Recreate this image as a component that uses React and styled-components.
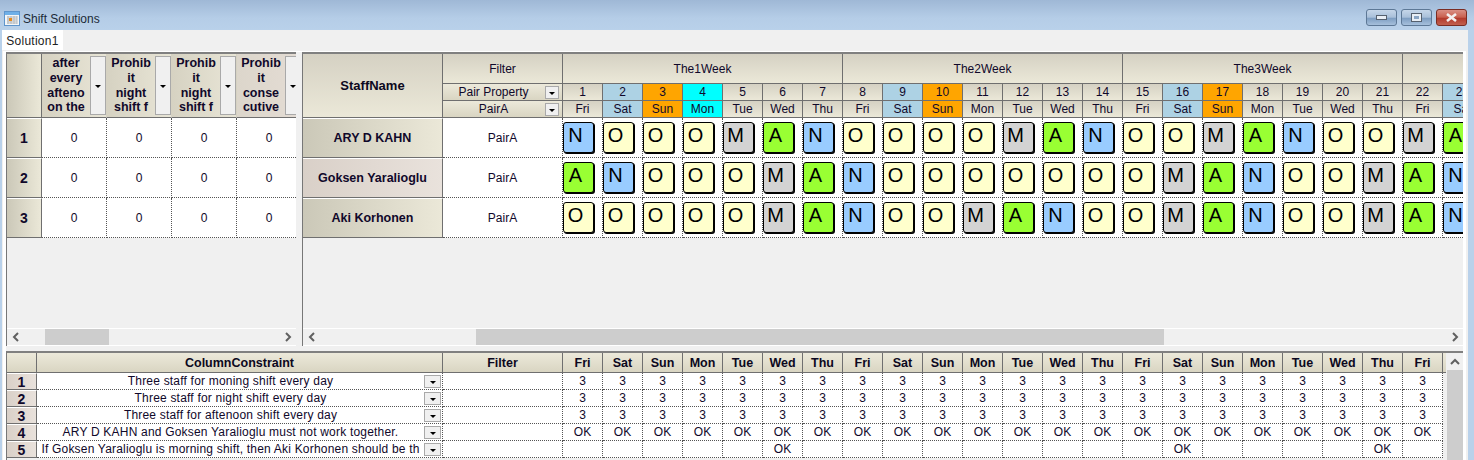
import React from 'react'
import styled, { createGlobalStyle } from 'styled-components'

const GlobalStyle = createGlobalStyle`
html, body {
  margin: 0;
  padding: 0;
  background: #b9d1ea;
  overflow: hidden;
}
* { box-sizing: border-box; }
`

const headGradient = 'linear-gradient(180deg, #d5d1c3 0%, #ebe8d8 100%)'
const topGradient = 'linear-gradient(180deg, #ece9da 0%, #d9d5c2 100%)'
const sideGradient = 'linear-gradient(90deg, #cbc8b8 0%, #ebe8d8 100%)'
const pinkGradient = 'linear-gradient(90deg, #d9d0c8 0%, #e9e2dc 100%)'

const Window = styled.div`
width: 1474px;
height: 460px;
display: flex;
flex-direction: column;
overflow: hidden;
font-family: "Liberation Sans", Arial, sans-serif;
font-size: 12px;
color: #10082a;
background: #b9d1ea;
`
const TitleBar = styled.div`
height: 30px;
flex: none;
display: flex;
align-items: flex-start;
padding: 9px 7px 0 4px;
background: linear-gradient(180deg, #9fb8d6 0%, #b5cde7 60%, #b9d1ea 100%);
`
const IconSlot = styled.div`
height: 16px;
margin-top: 2px;
`
const TitleText = styled.span`
margin: 3px 0 0 3px;
color: #1c2a38;
flex: 1;
`
const WinButton = styled.div`
width: 31px;
height: 17px;
margin-left: 4px;
display: flex;
align-items: center;
justify-content: center;
border: 1px solid #5d7896;
border-radius: 3px;
background: ${p => p.$close
    ? 'linear-gradient(180deg, #d98f84 0%, #c9604f 48%, #b23a2c 55%, #c2604f 100%)'
    : 'linear-gradient(180deg, #c5d6e9 0%, #a9c0da 48%, #7e9ec2 55%, #a6c0dc 100%)'};
border-color: ${p => p.$close ? '#7a2c22' : '#5d7896'};
`
const Client = styled.div`
flex: 1;
margin: 0 6px 0 2px;
background: #f0f0f0;
display: flex;
flex-direction: column;
min-height: 0;
`
const TabStrip = styled.div`
height: 21px;
flex: none;
display: flex;
`
const Tab = styled.div`
width: 61px;
height: 20px;
padding-top: 1px;
background: #fff;
display: flex;
align-items: center;
justify-content: center;
color: #222;
letter-spacing: 0.25px;
`
const Panes = styled.div`
flex: 1;
margin: 0 2px 0 1px;
padding: 1px 3px 0;
background: #fff;
display: flex;
flex-direction: column;
min-height: 0;
`
const TopPanes = styled.div`
height: 294px;
flex: none;
display: flex;
gap: 6px;
background: #f0f0f0;
`
const Splitter = styled.div`
height: 5px;
flex: none;
background: #f0f0f0;
`
const Pane = styled.div`
width: ${p => p.$width}px;
flex: none;
display: flex;
flex-direction: column;
border-left: 1px solid #777;
border-top: 2px solid #808080;
overflow: hidden;
`
const GridArea = styled.div`
flex: 1;
overflow: hidden;
min-height: 0;
`
const Row = styled.div`
display: flex;
height: ${p => p.$h}px;
width: max-content;
`
const Stack = styled.div`
display: flex;
flex-direction: column;
`
const HeadCell = styled.div`
width: ${p => p.$w}px;
height: ${p => p.$h ? `${p.$h}px` : '100%'};
flex: none;
display: flex;
align-items: center;
justify-content: center;
position: relative;
padding-right: ${p => p.$pad || 0}px;
text-align: center;
background: ${p => p.$bg || headGradient};
border-right: 1px solid ${p => p.$plain ? 'transparent' : '#6f6f6f'};
border-bottom: 1px solid #6f6f6f;
font-weight: ${p => p.$bold ? 700 : 400};
font-size: ${p => p.$size || 12}px;
color: ${p => p.$bold ? '#0c0820' : '#10082a'};
`
const SideCell = styled(HeadCell)`
background: ${p => p.$pink ? pinkGradient : sideGradient};
border-top: 1px solid #fff;
font-weight: 700;
`
const MultiHead = styled.div`
flex: 1;
font-weight: 700;
font-size: 12.5px;
line-height: 14.7px;
`
const DropColumn = styled.div`
width: 16px;
height: 59px;
flex: none;
display: flex;
align-items: center;
justify-content: center;
background: #f0f0f0;
border: 1px solid #a9a9a9;
`
const Drop = styled.div`
position: absolute;
right: ${p => p.$right}px;
top: 2px;
width: ${p => p.$w}px;
height: 13px;
display: flex;
align-items: center;
justify-content: center;
background: #f0f0f0;
border: 1px solid #a9a9a9;
`
const Caret = styled.span`
width: 0;
height: 0;
margin-top: 2px;
border-left: 3px solid transparent;
border-right: 3px solid transparent;
border-top: 3px solid #000;
`
const Cell = styled.div`
width: ${p => p.$w}px;
height: 100%;
flex: none;
display: flex;
align-items: center;
justify-content: center;
position: relative;
background: #fff;
border-right: 1px dotted #555;
border-bottom: 1px dotted #555;
white-space: nowrap;
overflow: hidden;
`
const WideText = styled.span`
display: block;
width: 100%;
padding: 0 22px 0 4px;
text-align: center;
overflow: hidden;
white-space: nowrap;
letter-spacing: 0.2px;
`
const ShiftCell = styled.div`
width: 40px;
height: 100%;
flex: none;
padding: 4px 0 0 0;
background: #fff;
border-right: 1px dotted #555;
border-bottom: 1px dotted #555;
`
const ShiftBox = styled.div`
width: 31px;
height: 31px;
display: flex;
justify-content: center;
padding: 0 6px 0 0;
font-size: 20px;
line-height: 24px;
color: #000;
background: ${p => p.$bg};
border: 1px solid #000;
border-radius: 3px;
box-shadow: 1px 1px 0 #000;
`
const ScrollBar = styled.div`
height: 18px;
flex: none;
display: flex;
align-items: center;
background: #f0f0f0;
border-top: 1px solid #fff;
border-bottom: 1px solid #fff;
`
const ScrollTrack = styled.div`
flex: 1;
height: 16px;
padding-left: ${p => p.$left}px;
`
const ScrollThumb = styled.div`
width: ${p => p.$width}px;
height: 100%;
background: #cdcdcd;
`
const ArrowButton = styled.div`
width: ${p => p.$w || 17}px;
height: ${p => p.$h || 16}px;
flex: none;
display: flex;
align-items: center;
justify-content: center;
`
const BottomPane = styled.div`
flex: 1;
display: flex;
background: #f0f0f0;
border-left: 1px solid #777;
border-top: 2px solid #808080;
min-height: 0;
overflow: hidden;
`
const BottomGrid = styled.div`
width: 1436px;
flex: none;
`
const Gutter = styled.div`
width: 3px;
flex: none;
`
const GutterHead = styled.div`
height: 20px;
background: ${topGradient};
border-bottom: 1px solid #6f6f6f;
`
const VScroll = styled.div`
width: 16px;
flex: none;
margin-left: 1px;
display: flex;
flex-direction: column;
`
const VTrack = styled.div`
flex: 1;
background: #cdcdcd;
`

const WEEKDAYS = ['Fri', 'Sat', 'Sun', 'Mon', 'Tue', 'Wed', 'Thu']
const DAY_COUNT = 23
const days = Array.from({ length: DAY_COUNT }, (_, i) => ({ n: i + 1, name: WEEKDAYS[i % 7] }))

const dayColor = (d) => {
    if (d.n === 4) return '#00ffff'
    if (d.name === 'Sat') return '#add2e4'
    if (d.name === 'Sun') return '#ffa500'
    return null
}

const shiftColors = { N: '#99ccff', O: '#ffffcc', M: '#d3d3d3', A: '#99ff33' }

const staff = [
    { name: 'ARY D KAHN', shifts: 'NOOOMANOOOOMANOOMANOOMA' },
    { name: 'Goksen Yaralioglu', pink: true, shifts: 'ANOOOMANOOOOOOOMANOOMAN' },
    { name: 'Aki Korhonen', shifts: 'OOOOOMANOOMANOOMANOOMAN' },
]

const leftHeads = [
    ['after', 'every', 'afteno', 'on the'],
    ['Prohib', 'it', 'night', 'shift f'],
    ['Prohib', 'it', 'night', 'shift f'],
    ['Prohib', 'it', 'conse', 'cutive'],
]

const threes = days.slice(0, 22).map(() => '3')

const constraints = [
    { text: 'Three staff for moning shift every day', vals: threes },
    { text: 'Three staff for night shift every day', vals: threes },
    { text: 'Three staff for aftenoon shift every day', vals: threes },
    { text: 'ARY D KAHN and Goksen Yaralioglu must not work together.', vals: threes.map(() => 'OK') },
    {
        text: 'If Goksen Yaralioglu is morning shift, then Aki Korhonen should be th',
        vals: days.slice(0, 22).map(d => ([6, 16, 21].includes(d.n) ? 'OK' : '')),
    },
]

const Chevron = ({ dir }) => {
    const points = {
        left: '7,1 3,5 7,9',
        right: '3,1 7,5 3,9',
        up: '1,7 5,3 9,7',
    }
    return (
        <svg width="10" height="10" viewBox="0 0 10 10">
            <polyline points={points[dir]} fill="none" stroke="#606060" strokeWidth="2" />
        </svg>
    )
}

// small calendar: blue band on top, grey grid, one orange day
const AppIcon = () => (
    <svg width="16" height="16" viewBox="0 0 16 16">
        <rect x="0.5" y="0.5" width="15" height="14" fill="#f4f6f8" stroke="#5f95cc" />
        <rect x="1" y="1" width="14" height="3" fill="#6fb0e8" />
        <path d="M3 6h10M3 8h10M3 10h10M3 12h10M4 5v8M7 5v8M10 5v8M13 5v8" stroke="#b4b8bc" strokeWidth="1" />
        <rect x="5" y="7" width="3" height="3" fill="#e88a1c" />
    </svg>
)

const Scroll = ({ left, width }) => (
    <ScrollBar>
        <ArrowButton><Chevron dir="left" /></ArrowButton>
        <ScrollTrack $left={left}><ScrollThumb $width={width} /></ScrollTrack>
        <ArrowButton><Chevron dir="right" /></ArrowButton>
    </ScrollBar>
)

const LeftPane = () => (
    <Pane $width={290}>
        <GridArea>
            <Row $h={64}>
                <HeadCell $w={35} $bg={sideGradient} />
                {leftHeads.map((lines, i) => (
                    <HeadCell key={i} $w={65} $plain $bg={i === 3 ? 'linear-gradient(90deg,#dcd6cb,#e4dcd4)' : 'linear-gradient(90deg,#d6d2c2,#e8e5d6)'}>
                        <MultiHead>{lines.map((l, j) => <div key={j}>{l}</div>)}</MultiHead>
                        <DropColumn><Caret /></DropColumn>
                    </HeadCell>
                ))}
            </Row>
            {staff.map((s, i) => (
                <Row key={s.name} $h={40}>
                    <SideCell $w={35} $size={14}>{i + 1}</SideCell>
                    {leftHeads.map((_, j) => <Cell key={j} $w={65}>0</Cell>)}
                </Row>
            ))}
        </GridArea>
        <Scroll left={21} width={64} />
    </Pane>
)

const RightPane = () => (
    <Pane $width={1161}>
        <GridArea>
            <Row $h={64}>
                <HeadCell $w={140} $bold $size={13}>StaffName</HeadCell>
                <Stack>
                    <HeadCell $w={120} $h={30}>Filter</HeadCell>
                    <HeadCell $w={120} $h={17} $pad={18} $bg={topGradient}>
                        <span>Pair Property</span>
                        <Drop $right={3} $w={14}><Caret /></Drop>
                    </HeadCell>
                    <HeadCell $w={120} $h={17} $pad={18} $bg={topGradient}>
                        <span>PairA</span>
                        <Drop $right={3} $w={14}><Caret /></Drop>
                    </HeadCell>
                </Stack>
                <Stack>
                    <Row $h={30}>
                        {['The1Week', 'The2Week', 'The3Week', ''].map((w, i) => <HeadCell key={i} $w={280}>{w}</HeadCell>)}
                    </Row>
                    <Row $h={17}>
                        {days.map(d => <HeadCell key={d.n} $w={40} $bg={dayColor(d)}>{d.n}</HeadCell>)}
                    </Row>
                    <Row $h={17}>
                        {days.map(d => <HeadCell key={d.n} $w={40} $bg={dayColor(d)}>{d.name}</HeadCell>)}
                    </Row>
                </Stack>
            </Row>
            {staff.map(s => (
                <Row key={s.name} $h={40}>
                    <SideCell $w={140} $size={12.5} $pink={s.pink}>{s.name}</SideCell>
                    <Cell $w={120}>PairA</Cell>
                    {s.shifts.split('').map((c, i) => (
                        <ShiftCell key={i}><ShiftBox $bg={shiftColors[c]}>{c}</ShiftBox></ShiftCell>
                    ))}
                </Row>
            ))}
        </GridArea>
        <Scroll left={156} width={688} />
    </Pane>
)

const ConstraintPane = () => (
    <BottomPane>
        <BottomGrid>
            <Row $h={20}>
                <HeadCell $w={30} $bg={topGradient} />
                <HeadCell $w={406} $bg={topGradient} $bold $size={12.5}>ColumnConstraint</HeadCell>
                <HeadCell $w={120} $bg={topGradient} $bold $size={12.5}>Filter</HeadCell>
                {days.slice(0, 22).map(d => <HeadCell key={d.n} $w={40} $bg={topGradient} $bold $size={12.5}>{d.name}</HeadCell>)}
            </Row>
            {constraints.map((c, i) => (
                <Row key={i} $h={17}>
                    <SideCell $w={30} $size={14} $pink>{i + 1}</SideCell>
                    <Cell $w={406}>
                        <WideText>{c.text}</WideText>
                        <Drop $right={1} $w={17}><Caret /></Drop>
                    </Cell>
                    <Cell $w={120} />
                    {c.vals.map((v, j) => <Cell key={j} $w={40}>{v}</Cell>)}
                </Row>
            ))}
        </BottomGrid>
        <Gutter><GutterHead /></Gutter>
        <VScroll>
            <ArrowButton $w={16} $h={17}><Chevron dir="up" /></ArrowButton>
            <VTrack />
        </VScroll>
    </BottomPane>
)

const App = () => (
    <Window>
        <GlobalStyle />
        <TitleBar>
            <IconSlot><AppIcon /></IconSlot>
            <TitleText>Shift Solutions</TitleText>
            <WinButton>
                <svg width="11" height="5" viewBox="0 0 11 5"><rect x="0.5" y="0.5" width="10" height="4" fill="#e8eef5" stroke="#55606e" /></svg>
            </WinButton>
            <WinButton>
                <svg width="11" height="9" viewBox="0 0 11 9"><rect x="0.5" y="0.5" width="10" height="8" fill="#e8eef5" stroke="#55606e" /><rect x="3" y="3" width="5" height="3" fill="#8aa5c4" /></svg>
            </WinButton>
            <WinButton $close>
                <svg width="13" height="9" viewBox="0 0 13 9"><path d="M2 1l9 7M11 1l-9 7" stroke="#f4f0f0" strokeWidth="2.6" /></svg>
            </WinButton>
        </TitleBar>
        <Client>
            <TabStrip><Tab>Solution1</Tab></TabStrip>
            <Panes>
                <TopPanes>
                    <LeftPane />
                    <RightPane />
                </TopPanes>
                <Splitter />
                <ConstraintPane />
            </Panes>
        </Client>
    </Window>
)

export default App
